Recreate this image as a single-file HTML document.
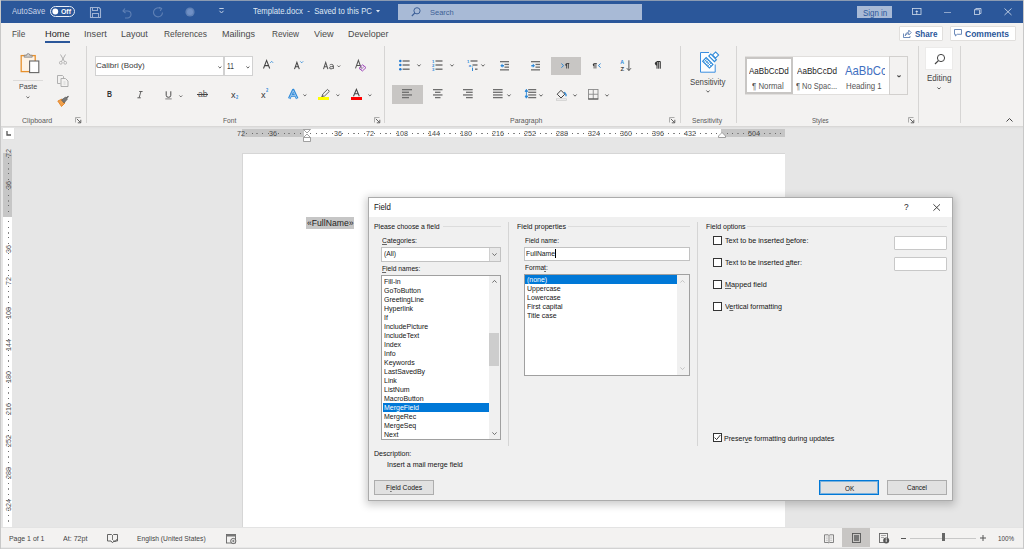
<!DOCTYPE html><html><head><meta charset="utf-8"><style>
*{margin:0;padding:0;box-sizing:border-box}
html,body{width:1024px;height:549px;overflow:hidden;background:#e6e6e6;font-family:"Liberation Sans",sans-serif;color:#262626}
.a{position:absolute}
.t{position:absolute;white-space:pre;line-height:1}
svg{overflow:visible}
u{text-decoration-thickness:1px;text-underline-offset:0.6px;text-decoration-color:#666}
</style></head><body>
<div class="a" style="left:0px;top:0px;width:1024px;height:23px;background:#2b579a"></div>
<div class="a" style="left:0px;top:23px;width:1024px;height:103px;background:#f3f2f1"></div>
<div class="a" style="left:0px;top:126px;width:1024px;height:1px;background:#d9d8d7"></div>
<div class="a" style="left:0px;top:127px;width:1024px;height:2px;background:linear-gradient(#dedede,#e6e6e6)"></div>
<div class="a" style="left:0px;top:527px;width:1024px;height:22px;background:#f3f2f1"></div>
<div class="a" style="left:0px;top:527px;width:1024px;height:1px;background:#e3e3e3"></div>
<div class="a" style="left:0px;top:547px;width:1024px;height:1px;background:#e8e8e8"></div>
<div class="a" style="left:0px;top:548px;width:1024px;height:1px;background:#d2d2d2"></div>
<div class="a" style="left:0px;top:0px;width:1024px;height:1px;background:#8b9bb2"></div>
<div class="a" style="left:0px;top:0px;width:1px;height:549px;background:#c8c8c8"></div>
<div class="a" style="left:1023px;top:0px;width:1px;height:549px;background:#c8c8c8"></div>
<div class="a" style="left:242px;top:153px;width:543px;height:374px;background:#fff;border-left:1px solid #d6d6d6;border-top:1px solid #d6d6d6"></div>
<div class="a" style="left:242px;top:129px;width:543px;height:8px;background:#fff"></div>
<div class="a" style="left:242px;top:129px;width:62px;height:8px;background:#c6c6c6"></div>
<div class="a" style="left:721px;top:129px;width:64px;height:8px;background:#c6c6c6"></div>
<div class="t" style="left:241.40px;top:129.9px;width:0;font-size:7.8px;color:#4a4a4a"><span style="position:absolute;left:-10px;width:20px;text-align:center;transform:scaleX(.92);white-space:nowrap">72</span></div>
<div class="t" style="left:273.45px;top:129.9px;width:0;font-size:7.8px;color:#4a4a4a"><span style="position:absolute;left:-10px;width:20px;text-align:center;transform:scaleX(.92);white-space:nowrap">36</span></div>
<div class="t" style="left:337.55px;top:129.9px;width:0;font-size:7.8px;color:#4a4a4a"><span style="position:absolute;left:-10px;width:20px;text-align:center;transform:scaleX(.92);white-space:nowrap">36</span></div>
<div class="t" style="left:369.60px;top:129.9px;width:0;font-size:7.8px;color:#4a4a4a"><span style="position:absolute;left:-10px;width:20px;text-align:center;transform:scaleX(.92);white-space:nowrap">72</span></div>
<div class="t" style="left:401.65px;top:129.9px;width:0;font-size:7.8px;color:#4a4a4a"><span style="position:absolute;left:-10px;width:20px;text-align:center;transform:scaleX(.92);white-space:nowrap">108</span></div>
<div class="t" style="left:433.70px;top:129.9px;width:0;font-size:7.8px;color:#4a4a4a"><span style="position:absolute;left:-10px;width:20px;text-align:center;transform:scaleX(.92);white-space:nowrap">144</span></div>
<div class="t" style="left:465.75px;top:129.9px;width:0;font-size:7.8px;color:#4a4a4a"><span style="position:absolute;left:-10px;width:20px;text-align:center;transform:scaleX(.92);white-space:nowrap">180</span></div>
<div class="t" style="left:497.80px;top:129.9px;width:0;font-size:7.8px;color:#4a4a4a"><span style="position:absolute;left:-10px;width:20px;text-align:center;transform:scaleX(.92);white-space:nowrap">216</span></div>
<div class="t" style="left:529.85px;top:129.9px;width:0;font-size:7.8px;color:#4a4a4a"><span style="position:absolute;left:-10px;width:20px;text-align:center;transform:scaleX(.92);white-space:nowrap">252</span></div>
<div class="t" style="left:561.90px;top:129.9px;width:0;font-size:7.8px;color:#4a4a4a"><span style="position:absolute;left:-10px;width:20px;text-align:center;transform:scaleX(.92);white-space:nowrap">288</span></div>
<div class="t" style="left:593.95px;top:129.9px;width:0;font-size:7.8px;color:#4a4a4a"><span style="position:absolute;left:-10px;width:20px;text-align:center;transform:scaleX(.92);white-space:nowrap">324</span></div>
<div class="t" style="left:626.00px;top:129.9px;width:0;font-size:7.8px;color:#4a4a4a"><span style="position:absolute;left:-10px;width:20px;text-align:center;transform:scaleX(.92);white-space:nowrap">360</span></div>
<div class="t" style="left:658.05px;top:129.9px;width:0;font-size:7.8px;color:#4a4a4a"><span style="position:absolute;left:-10px;width:20px;text-align:center;transform:scaleX(.92);white-space:nowrap">396</span></div>
<div class="t" style="left:690.10px;top:129.9px;width:0;font-size:7.8px;color:#4a4a4a"><span style="position:absolute;left:-10px;width:20px;text-align:center;transform:scaleX(.92);white-space:nowrap">432</span></div>
<div class="t" style="left:754.20px;top:129.9px;width:0;font-size:7.8px;color:#4a4a4a"><span style="position:absolute;left:-10px;width:20px;text-align:center;transform:scaleX(.92);white-space:nowrap">504</span></div>
<svg class="a" style="left:242px;top:0" width="543" height="140"><rect x="4" y="133" width="1" height="1" fill="#6a6a6a"/><rect x="10" y="133" width="1" height="1" fill="#6a6a6a"/><rect x="14" y="133" width="2" height="1" fill="#8a8a8a"/><rect x="20" y="133" width="1" height="1" fill="#6a6a6a"/><rect x="26" y="133" width="1" height="1" fill="#6a6a6a"/><rect x="36" y="133" width="1" height="1" fill="#6a6a6a"/><rect x="42" y="133" width="1" height="1" fill="#6a6a6a"/><rect x="46" y="133" width="2" height="1" fill="#8a8a8a"/><rect x="52" y="133" width="1" height="1" fill="#6a6a6a"/><rect x="58" y="133" width="1" height="1" fill="#6a6a6a"/><rect x="68" y="133" width="1" height="1" fill="#6a6a6a"/><rect x="74" y="133" width="1" height="1" fill="#6a6a6a"/><rect x="79" y="133" width="2" height="1" fill="#8a8a8a"/><rect x="84" y="133" width="1" height="1" fill="#6a6a6a"/><rect x="90" y="133" width="1" height="1" fill="#6a6a6a"/><rect x="100" y="133" width="1" height="1" fill="#6a6a6a"/><rect x="106" y="133" width="1" height="1" fill="#6a6a6a"/><rect x="111" y="133" width="2" height="1" fill="#8a8a8a"/><rect x="116" y="133" width="1" height="1" fill="#6a6a6a"/><rect x="122" y="133" width="1" height="1" fill="#6a6a6a"/><rect x="132" y="133" width="1" height="1" fill="#6a6a6a"/><rect x="138" y="133" width="1" height="1" fill="#6a6a6a"/><rect x="143" y="133" width="2" height="1" fill="#8a8a8a"/><rect x="148" y="133" width="1" height="1" fill="#6a6a6a"/><rect x="154" y="133" width="1" height="1" fill="#6a6a6a"/><rect x="164" y="133" width="1" height="1" fill="#6a6a6a"/><rect x="170" y="133" width="1" height="1" fill="#6a6a6a"/><rect x="175" y="133" width="2" height="1" fill="#8a8a8a"/><rect x="181" y="133" width="1" height="1" fill="#6a6a6a"/><rect x="186" y="133" width="1" height="1" fill="#6a6a6a"/><rect x="197" y="133" width="1" height="1" fill="#6a6a6a"/><rect x="202" y="133" width="1" height="1" fill="#6a6a6a"/><rect x="207" y="133" width="2" height="1" fill="#8a8a8a"/><rect x="213" y="133" width="1" height="1" fill="#6a6a6a"/><rect x="218" y="133" width="1" height="1" fill="#6a6a6a"/><rect x="229" y="133" width="1" height="1" fill="#6a6a6a"/><rect x="234" y="133" width="1" height="1" fill="#6a6a6a"/><rect x="239" y="133" width="2" height="1" fill="#8a8a8a"/><rect x="245" y="133" width="1" height="1" fill="#6a6a6a"/><rect x="250" y="133" width="1" height="1" fill="#6a6a6a"/><rect x="261" y="133" width="1" height="1" fill="#6a6a6a"/><rect x="266" y="133" width="1" height="1" fill="#6a6a6a"/><rect x="271" y="133" width="2" height="1" fill="#8a8a8a"/><rect x="277" y="133" width="1" height="1" fill="#6a6a6a"/><rect x="282" y="133" width="1" height="1" fill="#6a6a6a"/><rect x="293" y="133" width="1" height="1" fill="#6a6a6a"/><rect x="298" y="133" width="1" height="1" fill="#6a6a6a"/><rect x="303" y="133" width="2" height="1" fill="#8a8a8a"/><rect x="309" y="133" width="1" height="1" fill="#6a6a6a"/><rect x="314" y="133" width="1" height="1" fill="#6a6a6a"/><rect x="325" y="133" width="1" height="1" fill="#6a6a6a"/><rect x="330" y="133" width="1" height="1" fill="#6a6a6a"/><rect x="335" y="133" width="2" height="1" fill="#8a8a8a"/><rect x="341" y="133" width="1" height="1" fill="#6a6a6a"/><rect x="346" y="133" width="1" height="1" fill="#6a6a6a"/><rect x="357" y="133" width="1" height="1" fill="#6a6a6a"/><rect x="362" y="133" width="1" height="1" fill="#6a6a6a"/><rect x="367" y="133" width="2" height="1" fill="#8a8a8a"/><rect x="373" y="133" width="1" height="1" fill="#6a6a6a"/><rect x="378" y="133" width="1" height="1" fill="#6a6a6a"/><rect x="389" y="133" width="1" height="1" fill="#6a6a6a"/><rect x="394" y="133" width="1" height="1" fill="#6a6a6a"/><rect x="399" y="133" width="2" height="1" fill="#8a8a8a"/><rect x="405" y="133" width="1" height="1" fill="#6a6a6a"/><rect x="410" y="133" width="1" height="1" fill="#6a6a6a"/><rect x="421" y="133" width="1" height="1" fill="#6a6a6a"/><rect x="426" y="133" width="1" height="1" fill="#6a6a6a"/><rect x="431" y="133" width="2" height="1" fill="#8a8a8a"/><rect x="437" y="133" width="1" height="1" fill="#6a6a6a"/><rect x="442" y="133" width="1" height="1" fill="#6a6a6a"/><rect x="453" y="133" width="1" height="1" fill="#6a6a6a"/><rect x="458" y="133" width="1" height="1" fill="#6a6a6a"/><rect x="463" y="133" width="2" height="1" fill="#8a8a8a"/><rect x="469" y="133" width="1" height="1" fill="#6a6a6a"/><rect x="474" y="133" width="1" height="1" fill="#6a6a6a"/><rect x="485" y="133" width="1" height="1" fill="#6a6a6a"/><rect x="490" y="133" width="1" height="1" fill="#6a6a6a"/><rect x="495" y="133" width="2" height="1" fill="#8a8a8a"/><rect x="501" y="133" width="1" height="1" fill="#6a6a6a"/><rect x="506" y="133" width="1" height="1" fill="#6a6a6a"/><rect x="517" y="133" width="1" height="1" fill="#6a6a6a"/><rect x="522" y="133" width="1" height="1" fill="#6a6a6a"/><rect x="527" y="133" width="2" height="1" fill="#8a8a8a"/><rect x="533" y="133" width="1" height="1" fill="#6a6a6a"/><rect x="538" y="133" width="1" height="1" fill="#6a6a6a"/></svg>
<svg class="a" style="left:302.5px;top:128.5px;" width="8" height="13" viewBox="0 0 8 13"><path d="M.5 .5H7.5L4 4z" fill="#fff" stroke="#8a8a8a" stroke-width=".8"/><path d="M4 5L.5 8.5V12.5H7.5V8.5z" fill="#fff" stroke="#8a8a8a" stroke-width=".8"/><path d="M.5 8.5H7.5" stroke="#8a8a8a" stroke-width=".8"/></svg>
<svg class="a" style="left:717.5px;top:132px;" width="8" height="6" viewBox="0 0 8 6"><path d="M4 .5L.5 4V5.5H7.5V4z" fill="#fff" stroke="#8a8a8a" stroke-width=".8"/></svg>
<div class="a" style="left:2px;top:127px;width:13px;height:13px;background:#fff;border:1px solid #e3e3e3"></div>
<svg class="a" style="left:6px;top:131px;" width="5" height="5" viewBox="0 0 5 5"><path d="M1 0V4H5" fill="none" stroke="#555" stroke-width="1.3"/></svg>
<div class="a" style="left:3px;top:153px;width:9px;height:374px;background:#fff"></div>
<div class="a" style="left:3px;top:153px;width:9px;height:64px;background:#c6c6c6"></div>
<div class="t" style="left:8.5px;top:152.50px;width:0;height:0;font-size:7.8px;color:#4a4a4a"><span style="position:absolute;left:-8px;top:-4px;width:16px;height:8px;text-align:center;transform:rotate(-90deg) scaleX(.92);line-height:8px;white-space:nowrap">72</span></div>
<div class="t" style="left:8.5px;top:184.55px;width:0;height:0;font-size:7.8px;color:#4a4a4a"><span style="position:absolute;left:-8px;top:-4px;width:16px;height:8px;text-align:center;transform:rotate(-90deg) scaleX(.92);line-height:8px;white-space:nowrap">36</span></div>
<div class="t" style="left:8.5px;top:248.65px;width:0;height:0;font-size:7.8px;color:#4a4a4a"><span style="position:absolute;left:-8px;top:-4px;width:16px;height:8px;text-align:center;transform:rotate(-90deg) scaleX(.92);line-height:8px;white-space:nowrap">36</span></div>
<div class="t" style="left:8.5px;top:280.70px;width:0;height:0;font-size:7.8px;color:#4a4a4a"><span style="position:absolute;left:-8px;top:-4px;width:16px;height:8px;text-align:center;transform:rotate(-90deg) scaleX(.92);line-height:8px;white-space:nowrap">72</span></div>
<div class="t" style="left:8.5px;top:312.75px;width:0;height:0;font-size:7.8px;color:#4a4a4a"><span style="position:absolute;left:-8px;top:-4px;width:16px;height:8px;text-align:center;transform:rotate(-90deg) scaleX(.92);line-height:8px;white-space:nowrap">108</span></div>
<div class="t" style="left:8.5px;top:344.80px;width:0;height:0;font-size:7.8px;color:#4a4a4a"><span style="position:absolute;left:-8px;top:-4px;width:16px;height:8px;text-align:center;transform:rotate(-90deg) scaleX(.92);line-height:8px;white-space:nowrap">144</span></div>
<div class="t" style="left:8.5px;top:376.85px;width:0;height:0;font-size:7.8px;color:#4a4a4a"><span style="position:absolute;left:-8px;top:-4px;width:16px;height:8px;text-align:center;transform:rotate(-90deg) scaleX(.92);line-height:8px;white-space:nowrap">180</span></div>
<div class="t" style="left:8.5px;top:408.90px;width:0;height:0;font-size:7.8px;color:#4a4a4a"><span style="position:absolute;left:-8px;top:-4px;width:16px;height:8px;text-align:center;transform:rotate(-90deg) scaleX(.92);line-height:8px;white-space:nowrap">216</span></div>
<div class="t" style="left:8.5px;top:440.95px;width:0;height:0;font-size:7.8px;color:#4a4a4a"><span style="position:absolute;left:-8px;top:-4px;width:16px;height:8px;text-align:center;transform:rotate(-90deg) scaleX(.92);line-height:8px;white-space:nowrap">252</span></div>
<div class="t" style="left:8.5px;top:473.00px;width:0;height:0;font-size:7.8px;color:#4a4a4a"><span style="position:absolute;left:-8px;top:-4px;width:16px;height:8px;text-align:center;transform:rotate(-90deg) scaleX(.92);line-height:8px;white-space:nowrap">288</span></div>
<div class="t" style="left:8.5px;top:505.05px;width:0;height:0;font-size:7.8px;color:#4a4a4a"><span style="position:absolute;left:-8px;top:-4px;width:16px;height:8px;text-align:center;transform:rotate(-90deg) scaleX(.92);line-height:8px;white-space:nowrap">324</span></div>
<svg class="a" style="left:0;top:140px" width="20" height="400"><rect x="8" y="17" width="1" height="1" fill="#6a6a6a"/><rect x="8" y="23" width="1" height="1" fill="#6a6a6a"/><rect x="8" y="28" width="1" height="2" fill="#8a8a8a"/><rect x="8" y="33" width="1" height="1" fill="#6a6a6a"/><rect x="8" y="39" width="1" height="1" fill="#6a6a6a"/><rect x="8" y="49" width="1" height="1" fill="#6a6a6a"/><rect x="8" y="55" width="1" height="1" fill="#6a6a6a"/><rect x="8" y="60" width="1" height="2" fill="#8a8a8a"/><rect x="8" y="65" width="1" height="1" fill="#6a6a6a"/><rect x="8" y="71" width="1" height="1" fill="#6a6a6a"/><rect x="8" y="81" width="1" height="1" fill="#6a6a6a"/><rect x="8" y="87" width="1" height="1" fill="#6a6a6a"/><rect x="8" y="92" width="1" height="2" fill="#8a8a8a"/><rect x="8" y="97" width="1" height="1" fill="#6a6a6a"/><rect x="8" y="103" width="1" height="1" fill="#6a6a6a"/><rect x="8" y="113" width="1" height="1" fill="#6a6a6a"/><rect x="8" y="119" width="1" height="1" fill="#6a6a6a"/><rect x="8" y="124" width="1" height="2" fill="#8a8a8a"/><rect x="8" y="130" width="1" height="1" fill="#6a6a6a"/><rect x="8" y="135" width="1" height="1" fill="#6a6a6a"/><rect x="8" y="146" width="1" height="1" fill="#6a6a6a"/><rect x="8" y="151" width="1" height="1" fill="#6a6a6a"/><rect x="8" y="156" width="1" height="2" fill="#8a8a8a"/><rect x="8" y="162" width="1" height="1" fill="#6a6a6a"/><rect x="8" y="167" width="1" height="1" fill="#6a6a6a"/><rect x="8" y="178" width="1" height="1" fill="#6a6a6a"/><rect x="8" y="183" width="1" height="1" fill="#6a6a6a"/><rect x="8" y="188" width="1" height="2" fill="#8a8a8a"/><rect x="8" y="194" width="1" height="1" fill="#6a6a6a"/><rect x="8" y="199" width="1" height="1" fill="#6a6a6a"/><rect x="8" y="210" width="1" height="1" fill="#6a6a6a"/><rect x="8" y="215" width="1" height="1" fill="#6a6a6a"/><rect x="8" y="220" width="1" height="2" fill="#8a8a8a"/><rect x="8" y="226" width="1" height="1" fill="#6a6a6a"/><rect x="8" y="231" width="1" height="1" fill="#6a6a6a"/><rect x="8" y="242" width="1" height="1" fill="#6a6a6a"/><rect x="8" y="247" width="1" height="1" fill="#6a6a6a"/><rect x="8" y="252" width="1" height="2" fill="#8a8a8a"/><rect x="8" y="258" width="1" height="1" fill="#6a6a6a"/><rect x="8" y="263" width="1" height="1" fill="#6a6a6a"/><rect x="8" y="274" width="1" height="1" fill="#6a6a6a"/><rect x="8" y="279" width="1" height="1" fill="#6a6a6a"/><rect x="8" y="284" width="1" height="2" fill="#8a8a8a"/><rect x="8" y="290" width="1" height="1" fill="#6a6a6a"/><rect x="8" y="295" width="1" height="1" fill="#6a6a6a"/><rect x="8" y="306" width="1" height="1" fill="#6a6a6a"/><rect x="8" y="311" width="1" height="1" fill="#6a6a6a"/><rect x="8" y="316" width="1" height="2" fill="#8a8a8a"/><rect x="8" y="322" width="1" height="1" fill="#6a6a6a"/><rect x="8" y="327" width="1" height="1" fill="#6a6a6a"/><rect x="8" y="338" width="1" height="1" fill="#6a6a6a"/><rect x="8" y="343" width="1" height="1" fill="#6a6a6a"/><rect x="8" y="348" width="1" height="2" fill="#8a8a8a"/><rect x="8" y="354" width="1" height="1" fill="#6a6a6a"/><rect x="8" y="359" width="1" height="1" fill="#6a6a6a"/><rect x="8" y="370" width="1" height="1" fill="#6a6a6a"/><rect x="8" y="375" width="1" height="1" fill="#6a6a6a"/><rect x="8" y="380" width="1" height="2" fill="#8a8a8a"/></svg>
<div class="a" style="left:306.3px;top:217.2px;width:47.7px;height:11.5px;background:#c6c6c6"></div>
<div class="t" style="left:307.00px;top:218.69px;font-size:8.60px;color:#222;transform:scaleX(1.0031);transform-origin:0 0;">«FullName»</div>
<div class="t" style="left:11.70px;top:7.35px;font-size:9.00px;color:#c9d5e8;transform:scaleX(0.8510);transform-origin:0 0;">AutoSave</div>
<div class="a" style="left:49.5px;top:5.6px;width:25.5px;height:11.5px;border:1px solid #e8eef6;border-radius:6px"></div>
<svg class="a" style="left:52px;top:7.6px;" width="7" height="7" viewBox="0 0 7 7"><circle cx="3.3" cy="3.5" r="2.9" fill="#fff"/></svg>
<div class="t" style="left:61.00px;top:8.08px;font-size:7.20px;color:#fff;font-weight:bold;transform:scaleX(0.9612);transform-origin:0 0;">Off</div>
<svg class="a" style="left:90px;top:7px;" width="11" height="11" viewBox="0 0 11 11"><path d="M.5 .5h8.5l1.5 1.5v8.5h-10z" fill="none" stroke="#9fb2d3" stroke-width="1.1"/><rect x="2.5" y=".5" width="5" height="3" fill="none" stroke="#9fb2d3"/><rect x="2.5" y="6.5" width="6" height="4" fill="none" stroke="#9fb2d3"/></svg>
<svg class="a" style="left:122px;top:7px;" width="10" height="11" viewBox="0 0 10 11"><path d="M3 1.5 L1 4 L3.5 6" fill="none" stroke="#5f80b5" stroke-width="1.1"/><path d="M1.5 4 H5.5 A3.5 3.5 0 0 1 5.5 11 H3" fill="none" stroke="#5f80b5" stroke-width="1.1"/></svg>
<svg class="a" style="left:153px;top:6.5px;" width="11" height="11" viewBox="0 0 11 11"><path d="M9.5 5.5 A4.5 4.5 0 1 1 7 1.3" fill="none" stroke="#5f80b5" stroke-width="1.1"/><path d="M6 .3 L8.6 1.5 L7.2 4" fill="none" stroke="#5f80b5" stroke-width="1.1"/></svg>
<svg class="a" style="left:185px;top:7px;" width="10" height="10" viewBox="0 0 10 10"><circle cx="5" cy="5" r="4.6" fill="#5f80b5"/><circle cx="5" cy="5" r="3" fill="#7090c5"/></svg>
<svg class="a" style="left:218.5px;top:8px;" width="5" height="7" viewBox="0 0 5 7"><path d="M.3 .5h4.4" stroke="#c2cfe4" stroke-width="1"/><path d="M.5 2.8 L2.5 5 L4.5 2.8" fill="none" stroke="#c2cfe4" stroke-width="1"/></svg>
<div class="t" style="left:252.50px;top:6.59px;font-size:8.60px;color:#dfe7f3;transform:scaleX(0.9020);transform-origin:0 0;">Template.docx  -  Saved to this PC</div>
<svg class="a" style="left:375.5px;top:10px;" width="4" height="3" viewBox="0 0 4 3"><path d="M0 0h4L2 2.5z" fill="#dfe7f3"/></svg>
<div class="a" style="left:398px;top:4px;width:244px;height:16px;background:#a8bad6"></div>
<svg class="a" style="left:410.5px;top:6.5px;" width="10" height="10" viewBox="0 0 10 10"><circle cx="6" cy="3.8" r="3.1" fill="none" stroke="#3c5f97" stroke-width="1"/><path d="M3.8 6 L.8 9" stroke="#3c5f97" stroke-width="1.1"/></svg>
<div class="t" style="left:429.50px;top:8.84px;font-size:7.60px;color:#3d5f95;transform:scaleX(0.9879);transform-origin:0 0;">Search</div>
<div class="a" style="left:857px;top:6px;width:35px;height:12px;background:#a8bad6"></div>
<div class="t" style="left:862.50px;top:8.54px;font-size:8.30px;color:#2b579a;transform:scaleX(0.9528);transform-origin:0 0;">Sign in</div>
<svg class="a" style="left:912px;top:8px;" width="9.5" height="7" viewBox="0 0 9.5 7"><rect x=".5" y=".5" width="8.5" height="6" fill="none" stroke="#d0dbec" stroke-width=".8"/><path d="M4.75 2.2 L3.2 4 H6.3z" fill="#d0dbec"/><path d="M4.75 4v2.5" stroke="#d0dbec" stroke-width=".8"/></svg>
<div class="a" style="left:944px;top:11.5px;width:7px;height:1px;background:#8fa6cb"></div>
<svg class="a" style="left:974px;top:8.2px;" width="7.5" height="7" viewBox="0 0 7.5 7"><rect x=".5" y="1.8" width="5" height="4.7" fill="none" stroke="#d0dbec" stroke-width=".8"/><path d="M1.8 1.8V.5h5.2v5h-1.3" fill="none" stroke="#d0dbec" stroke-width=".8"/></svg>
<svg class="a" style="left:1004px;top:7.5px;" width="8" height="7.5" viewBox="0 0 8 7.5"><path d="M.5 .5L7.5 7M7.5 .5L.5 7" stroke="#d0dbec" stroke-width=".85"/></svg>
<div class="t" style="left:11.70px;top:28.61px;font-size:9.40px;color:#4a4a4a;transform:scaleX(0.8788);transform-origin:0 0;">File</div>
<div class="t" style="left:44.50px;top:28.61px;font-size:9.40px;color:#262626;transform:scaleX(0.9881);transform-origin:0 0;">Home</div>
<div class="t" style="left:83.60px;top:28.61px;font-size:9.40px;color:#4a4a4a;transform:scaleX(0.9702);transform-origin:0 0;">Insert</div>
<div class="t" style="left:121.00px;top:28.61px;font-size:9.40px;color:#4a4a4a;transform:scaleX(0.9523);transform-origin:0 0;">Layout</div>
<div class="t" style="left:163.70px;top:28.61px;font-size:9.40px;color:#4a4a4a;transform:scaleX(0.8964);transform-origin:0 0;">References</div>
<div class="t" style="left:222.40px;top:28.61px;font-size:9.40px;color:#4a4a4a;transform:scaleX(0.9624);transform-origin:0 0;">Mailings</div>
<div class="t" style="left:271.60px;top:28.61px;font-size:9.40px;color:#4a4a4a;transform:scaleX(0.8790);transform-origin:0 0;">Review</div>
<div class="t" style="left:314.00px;top:28.61px;font-size:9.40px;color:#4a4a4a;transform:scaleX(0.9698);transform-origin:0 0;">View</div>
<div class="t" style="left:348.30px;top:28.61px;font-size:9.40px;color:#4a4a4a;transform:scaleX(0.9472);transform-origin:0 0;">Developer</div>
<div class="a" style="left:44.5px;top:40.5px;width:25px;height:2px;background:#2b579a"></div>
<div class="a" style="left:899px;top:25.5px;width:44px;height:15.5px;background:#fff;border:1px solid #e1dfdd;border-radius:1px"></div>
<div class="a" style="left:949.5px;top:25.5px;width:66px;height:15.5px;background:#fff;border:1px solid #e1dfdd;border-radius:1px"></div>
<svg class="a" style="left:903px;top:28.5px;" width="8.5" height="9" viewBox="0 0 8.5 9"><path d="M.5 4.5v4h6.5v-1.5" fill="none" stroke="#4a6fa8" stroke-width=".8"/><path d="M2.2 6.8 C2.4 4.4 3.8 3.3 5.8 3.2 V1.2 L8.2 3.6 L5.8 6 V4.5 C4.3 4.5 3.2 5.2 2.2 6.8z" fill="none" stroke="#4a6fa8" stroke-width=".8"/></svg>
<div class="t" style="left:914.60px;top:29.82px;font-size:8.80px;color:#2b579a;font-weight:bold;transform:scaleX(0.9156);transform-origin:0 0;">Share</div>
<svg class="a" style="left:954px;top:29.3px;" width="8" height="7.5" viewBox="0 0 8 7.5"><path d="M.5 .5h7v4.8H3.2L1.4 7V5.3H.5z" fill="none" stroke="#4a6fa8" stroke-width=".8"/></svg>
<div class="t" style="left:964.90px;top:29.82px;font-size:8.80px;color:#2b579a;font-weight:bold;transform:scaleX(0.9671);transform-origin:0 0;">Comments</div>
<div class="a" style="left:86px;top:46px;width:1px;height:77px;background:#d6d5d4"></div>
<div class="a" style="left:383.5px;top:46px;width:1px;height:77px;background:#d6d5d4"></div>
<div class="a" style="left:679.5px;top:46px;width:1px;height:77px;background:#d6d5d4"></div>
<div class="a" style="left:735.5px;top:46px;width:1px;height:77px;background:#d6d5d4"></div>
<div class="a" style="left:917.5px;top:46px;width:1px;height:77px;background:#d6d5d4"></div>
<div class="a" style="left:960px;top:46px;width:1px;height:77px;background:#d6d5d4"></div>
<div class="t" style="left:21.80px;top:116.54px;font-size:7.60px;color:#595959;transform:scaleX(0.9315);transform-origin:0 0;">Clipboard</div>
<div class="t" style="left:222.50px;top:116.54px;font-size:7.60px;color:#595959;transform:scaleX(0.8750);transform-origin:0 0;">Font</div>
<div class="t" style="left:510.00px;top:116.54px;font-size:7.60px;color:#595959;transform:scaleX(0.9157);transform-origin:0 0;">Paragraph</div>
<div class="t" style="left:691.90px;top:116.54px;font-size:7.60px;color:#595959;transform:scaleX(0.8772);transform-origin:0 0;">Sensitivity</div>
<div class="t" style="left:812.20px;top:116.54px;font-size:7.60px;color:#595959;transform:scaleX(0.8064);transform-origin:0 0;">Styles</div>
<svg class="a" style="left:75px;top:117px;" width="6.5" height="6.5" viewBox="0 0 6.5 6.5"><path d="M.5 5.5V.5H5.5" fill="none" stroke="#9a9a9a" stroke-width=".8"/><path d="M1.8 1.8L5.6 5.6M5.8 2.8V5.8H2.8" fill="none" stroke="#555" stroke-width=".9"/></svg>
<svg class="a" style="left:373.5px;top:117px;" width="6.5" height="6.5" viewBox="0 0 6.5 6.5"><path d="M.5 5.5V.5H5.5" fill="none" stroke="#9a9a9a" stroke-width=".8"/><path d="M1.8 1.8L5.6 5.6M5.8 2.8V5.8H2.8" fill="none" stroke="#555" stroke-width=".9"/></svg>
<svg class="a" style="left:669px;top:117px;" width="6.5" height="6.5" viewBox="0 0 6.5 6.5"><path d="M.5 5.5V.5H5.5" fill="none" stroke="#9a9a9a" stroke-width=".8"/><path d="M1.8 1.8L5.6 5.6M5.8 2.8V5.8H2.8" fill="none" stroke="#555" stroke-width=".9"/></svg>
<svg class="a" style="left:907.5px;top:117px;" width="6.5" height="6.5" viewBox="0 0 6.5 6.5"><path d="M.5 5.5V.5H5.5" fill="none" stroke="#9a9a9a" stroke-width=".8"/><path d="M1.8 1.8L5.6 5.6M5.8 2.8V5.8H2.8" fill="none" stroke="#555" stroke-width=".9"/></svg>
<svg class="a" style="left:20px;top:52px;" width="20" height="21" viewBox="0 0 20 21"><rect x="1.2" y="3.6" width="14" height="16" fill="#fdf3e6" stroke="#e8912d" stroke-width="1.3"/><path d="M4.2 5.2 V3.2 H6.6 A1.6 1.6 0 0 1 9.8 3.2 H12.2 V5.2z" fill="#d0d0d0" stroke="#7a7a7a" stroke-width=".7"/><rect x="9.6" y="9" width="9.2" height="11.6" fill="#fff" stroke="#666" stroke-width="1.1"/></svg>
<div class="a" style="left:13px;top:79.5px;width:30px;height:1px;background:#dcdbda"></div>
<div class="t" style="left:18.70px;top:83.48px;font-size:7.90px;color:#444;transform:scaleX(0.9066);transform-origin:0 0;">Paste</div>
<svg class="a" style="left:26px;top:96px;" width="3.8" height="3" viewBox="0 0 3.8 3"><path d="M.4 .5L1.9 2 L3.4 .5" fill="none" stroke="#555" stroke-width=".9"/></svg>
<svg class="a" style="left:59px;top:53.5px;" width="8" height="11" viewBox="0 0 8 11"><path d="M1.5 .5 L5.5 7.5 M6.5 .5 L2.5 7.5" stroke="#a8a8a8" stroke-width=".9"/><circle cx="1.8" cy="8.8" r="1.4" fill="none" stroke="#a8a8a8" stroke-width=".8"/><circle cx="6.2" cy="8.8" r="1.4" fill="none" stroke="#a8a8a8" stroke-width=".8"/></svg>
<svg class="a" style="left:57px;top:74.5px;" width="12" height="12" viewBox="0 0 12 12"><path d="M.5 .5h5l1 1v2" fill="none" stroke="#a8a8a8" stroke-width=".9"/><path d="M.5 .5v8h3" fill="none" stroke="#a8a8a8" stroke-width=".9"/><path d="M4 3.5h4.5l2.5 2.5v5.5h-7z" fill="none" stroke="#a8a8a8" stroke-width=".9"/><path d="M6.5 7h2M6.5 9h2" stroke="#c0c0c0" stroke-width=".6"/></svg>
<svg class="a" style="left:57px;top:95.5px;" width="12" height="11" viewBox="0 0 12 11"><path d="M.8 5 L5 3 L8 7 L4.5 10.5z" fill="#f0a04b" stroke="#e07b1b" stroke-width=".8"/><path d="M4.5 4 L8.5 1 L10.5 3 L7 7z" fill="#777" stroke="#555" stroke-width=".6"/><path d="M9.3 2 L11.5 .2" stroke="#555" stroke-width="1.2"/></svg>
<div class="a" style="left:94.5px;top:56px;width:129px;height:19.5px;background:#fff;border:1px solid #d1d1d1"></div>
<div class="a" style="left:223.5px;top:56px;width:29px;height:19.5px;background:#fff;border:1px solid #d1d1d1"></div>
<div class="t" style="left:95.80px;top:62.41px;font-size:8.10px;color:#3a3a3a;transform:scaleX(0.9909);transform-origin:0 0;">Calibri (Body)</div>
<svg class="a" style="left:217.6px;top:65.5px;" width="3.8" height="3" viewBox="0 0 3.8 3"><path d="M.4 .5L1.9 2 L3.4 .5" fill="none" stroke="#444" stroke-width=".9"/></svg>
<div class="t" style="left:226.60px;top:62.02px;font-size:8.80px;color:#3a3a3a;transform:scaleX(0.7430);transform-origin:0 0;">11</div>
<svg class="a" style="left:246.2px;top:65.5px;" width="3.8" height="3" viewBox="0 0 3.8 3"><path d="M.4 .5L1.9 2 L3.4 .5" fill="none" stroke="#444" stroke-width=".9"/></svg>
<svg class="a" style="left:263px;top:60.3px;" width="7.2" height="8.5" viewBox="0 0 7.2 8.5"><path d="M0.5 8.5 L3.6 0.4 L6.7 8.5 M1.584 5.61 H5.6160000000000005" fill="none" stroke="#444" stroke-width="1.05"/></svg>
<svg class="a" style="left:270.3px;top:60.5px;" width="3.5" height="2.2" viewBox="0 0 3.5 2.2"><path d="M.3 1.8L1.7 .4L3.1 1.8" fill="none" stroke="#2b88d8" stroke-width=".9"/></svg>
<svg class="a" style="left:294.3px;top:61.7px;" width="5.8" height="7.1" viewBox="0 0 5.8 7.1"><path d="M0.5 7.1 L2.9 0.4 L5.3 7.1 M1.276 4.686 H4.524" fill="none" stroke="#444" stroke-width="1.05"/></svg>
<svg class="a" style="left:300.4px;top:60.8px;" width="3.5" height="2.2" viewBox="0 0 3.5 2.2"><path d="M.3 .4L1.7 1.8L3.1 .4" fill="none" stroke="#2b88d8" stroke-width=".9"/></svg>
<svg class="a" style="left:323px;top:61.7px;" width="5.4" height="7.1" viewBox="0 0 5.4 7.1"><path d="M0.5 7.1 L2.7 0.4 L4.9 7.1 M1.1880000000000002 4.686 H4.212000000000001" fill="none" stroke="#555" stroke-width="1.05"/></svg>
<svg class="a" style="left:328.8px;top:63.8px;" width="5.2" height="5.2" viewBox="0 0 5.2 5.2"><path d="M.7 1.1 Q1.5 .4 2.5 .4 Q4.4 .4 4.4 2 V4.9 M4.4 2.6 H2.4 Q.5 2.6 .5 3.8 Q.5 4.9 2 4.9 Q3.6 4.9 4.4 3.8" fill="none" stroke="#555" stroke-width=".95"/></svg>
<svg class="a" style="left:337px;top:64.8px;" width="3.6" height="2.9" viewBox="0 0 3.6 2.9"><path d="M.4 .5L1.8 1.9 L3.2 .5" fill="none" stroke="#555" stroke-width=".9"/></svg>
<svg class="a" style="left:355.2px;top:60.3px;" width="6.8" height="8.4" viewBox="0 0 6.8 8.4"><path d="M0.5 8.4 L3.4 0.4 L6.3 8.4 M1.496 5.5440000000000005 H5.304" fill="none" stroke="#555" stroke-width="1.05"/></svg>
<svg class="a" style="left:357.5px;top:63.5px;" width="9" height="7.5" viewBox="0 0 9 7.5"><path d="M1 4.3 L4.6 .8 L8 3.6 L4.4 7z" fill="none" stroke="#a24bbd" stroke-width="1"/><path d="M2.8 5.8 L6.2 2.3" stroke="#a24bbd" stroke-width=".8"/></svg>
<div class="t" style="left:106.90px;top:89.82px;font-size:8.80px;color:#333;font-weight:bold;transform:scaleX(0.7891);transform-origin:0 0;">B</div>
<svg class="a" style="left:137px;top:90.5px;" width="6" height="7.5" viewBox="0 0 6 7.5"><path d="M2.2 .5H5.6M.4 6.8H3.8M3.9 .5L2.1 6.8" fill="none" stroke="#555" stroke-width=".9"/></svg>
<svg class="a" style="left:164.5px;top:90.5px;" width="7" height="8.5" viewBox="0 0 7 8.5"><path d="M1.2 .3V4.3Q1.2 6.3 3.5 6.3Q5.8 6.3 5.8 4.3V.3" fill="none" stroke="#444" stroke-width=".95"/><path d="M.3 7.9H6.7" stroke="#666" stroke-width=".8"/></svg>
<svg class="a" style="left:179.2px;top:94.5px;" width="3.6" height="2.9" viewBox="0 0 3.6 2.9"><path d="M.4 .5L1.8 1.9 L3.2 .5" fill="none" stroke="#555" stroke-width=".9"/></svg>
<div class="t" style="left:197.60px;top:89.86px;font-size:8.40px;color:#555;transform:scaleX(1.0189);transform-origin:0 0;">ab</div>
<div class="a" style="left:196.7px;top:94px;width:11px;height:0.9px;background:#444"></div>
<div class="t" style="left:230.60px;top:90.69px;font-size:8.60px;color:#333;transform:scaleX(1.0698);transform-origin:0 0;">x</div>
<div class="t" style="left:236.00px;top:95.92px;font-size:4.80px;color:#2b88d8;font-weight:bold;transform:scaleX(0.8258);transform-origin:0 0;">2</div>
<div class="t" style="left:260.90px;top:90.69px;font-size:8.60px;color:#333;transform:scaleX(1.0698);transform-origin:0 0;">x</div>
<div class="t" style="left:266.10px;top:89.12px;font-size:4.80px;color:#2b88d8;font-weight:bold;transform:scaleX(0.8258);transform-origin:0 0;">2</div>
<svg class="a" style="left:288.3px;top:89px;" width="11" height="10.5" viewBox="0 0 11 10.5"><path d="M1.2 9.6 L5.2 1 L9.2 9.6 M3 6.4H7.4" fill="none" stroke="#2b88d8" stroke-width="2.6" stroke-linejoin="round"/><path d="M1.4 9.6 L5.2 1.6 L9 9.6 M3.2 6.4H7.2" fill="none" stroke="#e8f2fb" stroke-width=".6"/></svg>
<svg class="a" style="left:302.6px;top:94px;" width="3.8" height="2.9" viewBox="0 0 3.8 2.9"><path d="M.4 .5L1.9 1.9 L3.4 .5" fill="none" stroke="#555" stroke-width=".9"/></svg>
<svg class="a" style="left:318.5px;top:88.5px;" width="11" height="8.5" viewBox="0 0 11 8.5"><path d="M3 7.5 L3.8 5 L8.5 .4 L10.4 2.3 L5.6 7 z" fill="none" stroke="#555" stroke-width=".9"/><path d="M2.5 8 L4 6.4" stroke="#555" stroke-width=".9"/></svg>
<div class="a" style="left:318.3px;top:96.9px;width:11px;height:3px;background:#ffff00"></div>
<svg class="a" style="left:336px;top:94px;" width="3.8" height="2.9" viewBox="0 0 3.8 2.9"><path d="M.4 .5L1.9 1.9 L3.4 .5" fill="none" stroke="#555" stroke-width=".9"/></svg>
<svg class="a" style="left:353.4px;top:89px;" width="6.8" height="7.2" viewBox="0 0 6.8 7.2"><path d="M0.5 7.2 L3.4 0.4 L6.3 7.2 M1.496 4.752000000000001 H5.304" fill="none" stroke="#444" stroke-width="1.05"/></svg>
<div class="a" style="left:350.9px;top:96.9px;width:11px;height:3px;background:#ff0000"></div>
<svg class="a" style="left:368.4px;top:94px;" width="3.8" height="2.9" viewBox="0 0 3.8 2.9"><path d="M.4 .5L1.9 1.9 L3.4 .5" fill="none" stroke="#555" stroke-width=".9"/></svg>
<svg class="a" style="left:399px;top:59px;" width="11" height="12" viewBox="0 0 11 12"><circle cx="1.3" cy="2" r="1.25" fill="#1e78d2"/><rect x="3.6" y="1.3" width="7" height="1.4" fill="#6e6e6e"/><circle cx="1.3" cy="6" r="1.25" fill="#1e78d2"/><rect x="3.6" y="5.3" width="7" height="1.4" fill="#6e6e6e"/><circle cx="1.3" cy="10.200000000000003" r="1.25" fill="#1e78d2"/><rect x="3.6" y="9.500000000000004" width="7" height="1.4" fill="#6e6e6e"/></svg>
<svg class="a" style="left:417px;top:64.2px;" width="4" height="3.2" viewBox="0 0 4 3.2"><path d="M.4 .5L2.0 2.2 L3.6 .5" fill="none" stroke="#555" stroke-width="0.95"/></svg>
<svg class="a" style="left:432px;top:59px;" width="11" height="13" viewBox="0 0 11 13"><rect x="3.5" y="1.3" width="7" height="1.4" fill="#6e6e6e"/><rect x="3.5" y="5.3" width="7" height="1.4" fill="#6e6e6e"/><rect x="3.5" y="9.500000000000004" width="7" height="1.4" fill="#6e6e6e"/><text x="0" y="4" font-size="4.2" fill="#2b88d8" font-family="Liberation Sans" font-weight="bold">1</text><text x="0" y="8.2" font-size="4.2" fill="#2b88d8" font-family="Liberation Sans" font-weight="bold">2</text><text x="0" y="12.3" font-size="4.2" fill="#2b88d8" font-family="Liberation Sans" font-weight="bold">3</text></svg>
<svg class="a" style="left:449.5px;top:64.2px;" width="4" height="3.2" viewBox="0 0 4 3.2"><path d="M.4 .5L2.0 2.2 L3.6 .5" fill="none" stroke="#555" stroke-width="0.95"/></svg>
<svg class="a" style="left:467px;top:59px;" width="11" height="13" viewBox="0 0 11 13"><rect x="3.5" y="1.3" width="7" height="1.4" fill="#6e6e6e"/><rect x="5.5" y="5.3" width="5" height="1.4" fill="#6e6e6e"/><rect x="8" y="9.5" width="2.5" height="1.4" fill="#6e6e6e"/><text x="0" y="4" font-size="4.2" fill="#2b88d8" font-family="Liberation Sans" font-weight="bold">1</text><text x="1.8" y="8.2" font-size="4.2" fill="#2b88d8" font-family="Liberation Sans" font-weight="bold">a</text><rect x="5" y="9" width="1" height="3" fill="#2b88d8"/><rect x="5" y="7.6" width="1" height=".8" fill="#2b88d8"/></svg>
<svg class="a" style="left:481px;top:64.2px;" width="4" height="3.2" viewBox="0 0 4 3.2"><path d="M.4 .5L2.0 2.2 L3.6 .5" fill="none" stroke="#555" stroke-width="0.95"/></svg>
<svg class="a" style="left:500px;top:59.5px;" width="9" height="11" viewBox="0 0 9 11"><rect x="0" y="1" width="9" height="1.3" fill="#6e6e6e"/><rect x="4.5" y="3.8" width="4.5" height="1.3" fill="#6e6e6e"/><rect x="4.5" y="6.5" width="4.5" height="1.3" fill="#6e6e6e"/><rect x="0" y="9.2" width="9" height="1.3" fill="#6e6e6e"/><path d="M.3 5.7 L2.5 3.6 V4.9 H4 V6.5 H2.5 V7.8z" fill="#2b88d8"/></svg>
<svg class="a" style="left:530.5px;top:59.5px;" width="9" height="11" viewBox="0 0 9 11"><rect x="0" y="1" width="9" height="1.3" fill="#6e6e6e"/><rect x="4.5" y="3.8" width="4.5" height="1.3" fill="#6e6e6e"/><rect x="4.5" y="6.5" width="4.5" height="1.3" fill="#6e6e6e"/><rect x="0" y="9.2" width="9" height="1.3" fill="#6e6e6e"/><path d="M4 5.7 L1.8 3.6 V4.9 H.3 V6.5 H1.8 V7.8z" fill="#2b88d8"/></svg>
<div class="a" style="left:550.5px;top:56.5px;width:30.5px;height:18.5px;background:#c8c6c4"></div>
<svg class="a" style="left:561px;top:62.5px;" width="9" height="6" viewBox="0 0 9 6"><path d="M.4 .6 L2.6 2.6 L.4 4.6" fill="none" stroke="#2b88d8" stroke-width="1"/><path d="M5.6 5.5V.5H8.3M7.4 .5V5.5" fill="none" stroke="#333" stroke-width=".8"/><path d="M5.6 .5A1.3 1.3 0 0 0 5.6 3.1z" fill="#333"/></svg>
<svg class="a" style="left:591.5px;top:62.5px;" width="9" height="6" viewBox="0 0 9 6"><path d="M8.6 .6 L6.4 2.6 L8.6 4.6" fill="none" stroke="#2b88d8" stroke-width="1"/><path d="M2.1 5.5V.5H4.8M3.9 .5V5.5" fill="none" stroke="#333" stroke-width=".8"/><path d="M2.1 .5A1.3 1.3 0 0 0 2.1 3.1z" fill="#333"/></svg>
<svg class="a" style="left:620px;top:60px;" width="12" height="11.5" viewBox="0 0 12 11.5"><text x=".3" y="4.4" font-size="5.2" fill="#2b88d8" font-family="Liberation Sans" font-weight="bold">A</text><text x=".5" y="10.5" font-size="6" fill="#444" font-family="Liberation Sans" font-weight="bold">Z</text><path d="M8.9 .3V10.5M6.8 8.2L8.9 10.5L11 8.2" fill="none" stroke="#555" stroke-width="1"/></svg>
<svg class="a" style="left:652.5px;top:61px;" width="8" height="8" viewBox="0 0 8 8"><path d="M4 7.7V.5H7.3V7.7M5.7 .5V7.7" fill="none" stroke="#333" stroke-width="1"/><path d="M4 .5 A2.1 2.1 0 0 0 4 4.7z" fill="#333"/></svg>
<div class="a" style="left:392px;top:85px;width:30.5px;height:18.5px;background:#c8c6c4"></div>
<svg class="a" style="left:402px;top:89px;" width="11" height="10" viewBox="0 0 11 10"><rect x="0" y="0" width="10" height="1.3" fill="#6e6e6e"/><rect x="0" y="2.65" width="7" height="1.3" fill="#6e6e6e"/><rect x="0" y="5.3" width="10" height="1.3" fill="#6e6e6e"/><rect x="0" y="7.95" width="7" height="1.3" fill="#6e6e6e"/></svg>
<svg class="a" style="left:432.5px;top:89px;" width="11" height="10" viewBox="0 0 11 10"><rect x="0" y="0" width="9.5" height="1.3" fill="#6e6e6e"/><rect x="2" y="2.65" width="5.5" height="1.3" fill="#6e6e6e"/><rect x="0" y="5.3" width="9.5" height="1.3" fill="#6e6e6e"/><rect x="2" y="7.95" width="5.5" height="1.3" fill="#6e6e6e"/></svg>
<svg class="a" style="left:463px;top:89px;" width="11" height="10" viewBox="0 0 11 10"><rect x="0" y="0" width="9.7" height="1.3" fill="#6e6e6e"/><rect x="3" y="2.65" width="6.7" height="1.3" fill="#6e6e6e"/><rect x="0" y="5.3" width="9.7" height="1.3" fill="#6e6e6e"/><rect x="3" y="7.95" width="6.7" height="1.3" fill="#6e6e6e"/></svg>
<svg class="a" style="left:493.3px;top:89px;" width="11" height="10" viewBox="0 0 11 10"><rect x="0" y="0" width="9.6" height="1.3" fill="#6e6e6e"/><rect x="0" y="2.65" width="9.6" height="1.3" fill="#6e6e6e"/><rect x="0" y="5.3" width="9.6" height="1.3" fill="#6e6e6e"/><rect x="0" y="7.95" width="9.6" height="1.3" fill="#6e6e6e"/></svg>
<svg class="a" style="left:507px;top:94px;" width="4" height="3.2" viewBox="0 0 4 3.2"><path d="M.4 .5L2.0 2.2 L3.6 .5" fill="none" stroke="#555" stroke-width="0.95"/></svg>
<svg class="a" style="left:525px;top:89px;" width="12" height="10.5" viewBox="0 0 12 10.5"><rect x="3.2" y="0" width="8" height="1.3" fill="#6e6e6e"/><rect x="3.2" y="2.65" width="8" height="1.3" fill="#6e6e6e"/><rect x="3.2" y="5.3" width="8" height="1.3" fill="#6e6e6e"/><rect x="3.2" y="7.95" width="8" height="1.3" fill="#6e6e6e"/><path d="M1.4 1.5V8M.1 2.5L1.4 .3L2.7 2.5zM.1 7L1.4 9.2L2.7 7z" fill="#2b88d8" stroke="#2b88d8" stroke-width=".9"/></svg>
<svg class="a" style="left:539.2px;top:94px;" width="4" height="3.2" viewBox="0 0 4 3.2"><path d="M.4 .5L2.0 2.2 L3.6 .5" fill="none" stroke="#555" stroke-width="0.95"/></svg>
<svg class="a" style="left:555.5px;top:88.5px;" width="12" height="11.5" viewBox="0 0 12 11.5"><path d="M1.2 5.2 L5 1.3 L8.8 5.2 L5 9z" fill="none" stroke="#444" stroke-width="1"/><path d="M8.3 3 L10 5.5 V7.2" fill="none" stroke="#2b88d8" stroke-width="1.3"/><rect x=".5" y="9.8" width="10" height="1.5" fill="none" stroke="#c8c8c8" stroke-width=".7"/></svg>
<svg class="a" style="left:572.6px;top:94px;" width="4" height="3.2" viewBox="0 0 4 3.2"><path d="M.4 .5L2.0 2.2 L3.6 .5" fill="none" stroke="#555" stroke-width="0.95"/></svg>
<svg class="a" style="left:588px;top:89px;" width="10.5" height="10.5" viewBox="0 0 10.5 10.5"><rect x=".5" y=".5" width="9.5" height="9.5" fill="none" stroke="#8a8a8a" stroke-width=".9"/><path d="M5.25 .5V10M.5 5.25H10" stroke="#8a8a8a" stroke-width=".9"/><path d="M.3 10H10.2" stroke="#555" stroke-width="1.1"/></svg>
<svg class="a" style="left:605.4px;top:94px;" width="4" height="3.2" viewBox="0 0 4 3.2"><path d="M.4 .5L2.0 2.2 L3.6 .5" fill="none" stroke="#555" stroke-width="0.95"/></svg>
<svg class="a" style="left:699.5px;top:51.5px;" width="20" height="21" viewBox="0 0 20 21"><path d="M9 .5H.5V20.2H15.2V12.5" fill="#fbfdff" stroke="#3a8ee0" stroke-width="1"/><g transform="rotate(45 7.8 10.8)"><rect x="3" y="8.3" width="9.6" height="5" fill="#fff" stroke="#2b88d8" stroke-width="1.1"/><path d="M4.8 8.3V13.3M6.6 8.3V13.3M8.4 8.3V13.3M10.2 8.3V13.3M3 10.8H12.6" stroke="#2b88d8" stroke-width=".7"/></g><g transform="rotate(45 12.6 5.8)"><rect x="8.6" y="4.4" width="8" height="2.8" fill="#fff" stroke="#2b88d8" stroke-width="1.1"/></g><g transform="rotate(45 15.6 3)"><rect x="13.5" y=".8" width="4.2" height="4.4" fill="#fff" stroke="#2b88d8" stroke-width="1"/></g></svg>
<div class="t" style="left:690.00px;top:77.59px;font-size:8.60px;color:#444;transform:scaleX(0.9147);transform-origin:0 0;">Sensitivity</div>
<svg class="a" style="left:705.5px;top:90.3px;" width="4" height="3.2" viewBox="0 0 4 3.2"><path d="M.4 .5L2.0 2.2 L3.6 .5" fill="none" stroke="#555" stroke-width="0.95"/></svg>
<div class="a" style="left:744.5px;top:56.3px;width:145px;height:39px;background:#fff;border:1px solid #e1dfdd;border-right:none"></div>
<div class="a" style="left:745px;top:57px;width:47.8px;height:37px;border:2px solid #c8c6c4"></div>
<div class="t" style="left:749.00px;top:66.52px;font-size:8.80px;color:#1c1c1c;transform:scaleX(0.9146);transform-origin:0 0;">AaBbCcDd</div>
<div class="t" style="left:752.20px;top:81.96px;font-size:8.40px;color:#555;transform:scaleX(0.9371);transform-origin:0 0;">¶ Normal</div>
<div class="t" style="left:797.10px;top:66.52px;font-size:8.80px;color:#1c1c1c;transform:scaleX(0.9215);transform-origin:0 0;">AaBbCcDd</div>
<div class="t" style="left:795.90px;top:81.96px;font-size:8.40px;color:#555;transform:scaleX(0.8964);transform-origin:0 0;">¶ No Spac...</div>
<div class="a" style="left:840px;top:60.8px;width:44.5px;height:20px;overflow:hidden"><div class="t" style="left:4.90px;top:4.09px;font-size:12.60px;color:#3f6fbf;transform:scaleX(0.9000);transform-origin:0 0;">AaBbCcDd</div></div>
<div class="t" style="left:846.40px;top:82.26px;font-size:8.40px;color:#555;transform:scaleX(0.9346);transform-origin:0 0;">Heading 1</div>
<div class="a" style="left:889.3px;top:56.2px;width:18.3px;height:39px;background:#f3f2f1;border:1px solid #d2d0ce"></div>
<svg class="a" style="left:896.5px;top:74.5px;" width="4" height="2.9" viewBox="0 0 4 2.9"><path d="M.4 .5L2.0 1.9 L3.6 .5" fill="none" stroke="#444" stroke-width="1.1"/></svg>
<div class="a" style="left:925.4px;top:47.3px;width:27.4px;height:23px;background:#fff;border:1px solid #ecebea"></div>
<svg class="a" style="left:933.5px;top:52.5px;" width="12" height="12" viewBox="0 0 12 12"><circle cx="7" cy="5" r="3.6" fill="none" stroke="#444" stroke-width="1"/><path d="M4.4 7.6 L1 11" stroke="#444" stroke-width="1.2"/></svg>
<div class="t" style="left:926.70px;top:74.49px;font-size:8.60px;color:#444;transform:scaleX(0.9310);transform-origin:0 0;">Editing</div>
<svg class="a" style="left:937.2px;top:87px;" width="4" height="3" viewBox="0 0 4 3"><path d="M.4 .5L2.0 2 L3.6 .5" fill="none" stroke="#555" stroke-width="0.95"/></svg>
<svg class="a" style="left:1006px;top:118px;" width="7" height="4" viewBox="0 0 7 4"><path d="M.5 3.5L3.5 .5L6.5 3.5" fill="none" stroke="#444" stroke-width="1"/></svg>
<div class="t" style="left:9.00px;top:534.51px;font-size:7.40px;color:#444;transform:scaleX(0.9379);transform-origin:0 0;">Page 1 of 1</div>
<div class="t" style="left:62.80px;top:534.51px;font-size:7.40px;color:#444;transform:scaleX(0.9610);transform-origin:0 0;">At: 72pt</div>
<svg class="a" style="left:107px;top:533.5px;" width="11" height="9.5" viewBox="0 0 11 9.5"><path d="M.5 .5H4.5L5.5 1.5L6.5 .5H10.5V7H7L5.5 8.8L4 7H.5z" fill="none" stroke="#555" stroke-width=".9"/><path d="M5.5 1.5V6" stroke="#555" stroke-width=".8"/><path d="M6.5 6.5L7.8 8L10.2 5" fill="none" stroke="#555" stroke-width=".9"/></svg>
<div class="t" style="left:136.60px;top:534.71px;font-size:7.40px;color:#444;transform:scaleX(0.9079);transform-origin:0 0;">English (United States)</div>
<svg class="a" style="left:225.5px;top:533.5px;" width="11" height="10" viewBox="0 0 11 10"><rect x=".5" y=".5" width="9" height="8.5" fill="none" stroke="#666" stroke-width=".9"/><rect x=".5" y=".5" width="9" height="2" fill="#777"/><circle cx="7.3" cy="7" r="2.6" fill="#fff" stroke="#555" stroke-width=".9"/><path d="M7.3 5.6V8.4M5.9 7H8.7" stroke="#555" stroke-width=".7"/></svg>
<svg class="a" style="left:823.5px;top:533.5px;" width="10" height="9.5" viewBox="0 0 10 9.5"><path d="M.5 .8H4.3L5 1.5L5.7 .8H9.5V8.5H5.7L5 9.2L4.3 8.5H.5z" fill="none" stroke="#777" stroke-width=".9"/><path d="M5 1.5V8.5" stroke="#777" stroke-width=".8"/><path d="M1.8 3H3.8M1.8 4.8H3.8M1.8 6.6H3.8M6.2 3H8.2M6.2 4.8H8.2M6.2 6.6H8.2" stroke="#aaa" stroke-width=".6"/></svg>
<div class="a" style="left:842.4px;top:528px;width:27.6px;height:19px;background:#c8c6c4"></div>
<svg class="a" style="left:851.5px;top:533px;" width="9" height="10" viewBox="0 0 9 10"><rect x=".5" y=".5" width="8" height="9" fill="none" stroke="#555" stroke-width=".9"/><rect x="2" y="2" width="5" height="6" fill="#777"/></svg>
<svg class="a" style="left:879px;top:533px;" width="11" height="10.5" viewBox="0 0 11 10.5"><rect x=".5" y=".5" width="8" height="9" fill="none" stroke="#666" stroke-width=".9"/><path d="M2 2.5H7M2 4.5H5" stroke="#888" stroke-width=".7"/><circle cx="7.2" cy="7.4" r="3" fill="#555"/><path d="M7.2 6.3V8.9" stroke="#fff" stroke-width=".9"/><circle cx="7.2" cy="5.4" r=".5" fill="#fff"/></svg>
<div class="a" style="left:901.3px;top:537.5px;width:5.2px;height:1px;background:#555"></div>
<div class="a" style="left:910.3px;top:537.8px;width:66px;height:1px;background:#c8c8c8"></div>
<div class="a" style="left:941.7px;top:533.4px;width:3.5px;height:8px;background:#666"></div>
<svg class="a" style="left:979.5px;top:534.5px;" width="6" height="6" viewBox="0 0 6 6"><path d="M3 0V6M0 3H6" stroke="#555" stroke-width="1"/></svg>
<div class="t" style="left:997.70px;top:534.51px;font-size:7.40px;color:#444;transform:scaleX(0.8499);transform-origin:0 0;">100%</div>
<div class="a" style="left:368px;top:197px;width:585px;height:304px;background:#f0f0f0;border:1px solid #ababab;box-shadow:0 2px 8px 2px rgba(0,0,0,.2)"></div>
<div class="a" style="left:369px;top:198px;width:583px;height:19px;background:#fff"></div>
<div class="t" style="left:374.00px;top:202.69px;font-size:8.60px;color:#141414;transform:scaleX(0.9109);transform-origin:0 0;">Field</div>
<div class="t" style="left:904.20px;top:202.21px;font-size:9.40px;color:#222;transform:scaleX(0.8817);transform-origin:0 0;">?</div>
<svg class="a" style="left:932.5px;top:203.5px;" width="7.5" height="7" viewBox="0 0 7.5 7"><path d="M.4 .3L7 6.7M7 .3L.4 6.7" stroke="#333" stroke-width=".9"/></svg>
<div class="t" style="left:374.00px;top:222.62px;font-size:7.50px;color:#141414;transform:scaleX(0.9188);transform-origin:0 0;">Please choose a field</div>
<div class="a" style="left:443px;top:226px;width:58px;height:1px;background:#dcdcdc"></div>
<div class="t" style="left:516.60px;top:222.93px;font-size:7.50px;color:#141414;transform:scaleX(0.9482);transform-origin:0 0;">Field properties</div>
<div class="a" style="left:568px;top:226px;width:122px;height:1px;background:#dcdcdc"></div>
<div class="t" style="left:705.60px;top:222.93px;font-size:7.50px;color:#141414;transform:scaleX(0.9312);transform-origin:0 0;">Field options</div>
<div class="a" style="left:747px;top:226px;width:200px;height:1px;background:#dcdcdc"></div>
<div class="a" style="left:508px;top:222px;width:1px;height:224px;background:#d5d5d5"></div>
<div class="a" style="left:697px;top:222px;width:1px;height:224px;background:#d5d5d5"></div>
<div class="t" style="left:381.60px;top:236.62px;font-size:7.50px;color:#141414;transform:scaleX(0.9123);transform-origin:0 0;"><u>C</u>ategories:</div>
<div class="a" style="left:381px;top:247px;width:120px;height:15px;background:#fff;border:1px solid #c2c2c2"></div>
<div class="a" style="left:489px;top:248px;width:11px;height:13px;background:#e8e8e8;border-left:1px solid #d0d0d0"></div>
<svg class="a" style="left:492.2px;top:252.8px;" width="5" height="3.5" viewBox="0 0 5 3.5"><path d="M.4 .4L2.5 2.6L4.6 .4" fill="none" stroke="#555" stroke-width=".8"/></svg>
<div class="t" style="left:384.20px;top:250.43px;font-size:7.50px;color:#141414;transform:scaleX(0.8989);transform-origin:0 0;">(All)</div>
<div class="t" style="left:381.60px;top:264.62px;font-size:7.50px;color:#141414;transform:scaleX(0.8920);transform-origin:0 0;"><u>F</u>ield names:</div>
<div class="a" style="left:381px;top:275px;width:120px;height:165px;background:#fff;border:1px solid #a0a0a0"></div>
<div class="a" style="left:489px;top:276px;width:11px;height:163px;background:#f0f0f0"></div>
<div class="a" style="left:489.3px;top:333px;width:10px;height:32.5px;background:#cdcdcd"></div>
<svg class="a" style="left:492.2px;top:279.5px;" width="5" height="3.5" viewBox="0 0 5 3.5"><path d="M.4 2.6L2.5 .4L4.6 2.6" fill="none" stroke="#606060" stroke-width=".9"/></svg>
<svg class="a" style="left:492.2px;top:431.5px;" width="5" height="3.5" viewBox="0 0 5 3.5"><path d="M.4 .4L2.5 2.6L4.6 .4" fill="none" stroke="#606060" stroke-width=".9"/></svg>
<div class="t" style="left:384.00px;top:277.62px;font-size:7.50px;color:#141414;transform:scaleX(0.9300);transform-origin:0 0;">Fill-in</div>
<div class="t" style="left:384.00px;top:286.62px;font-size:7.50px;color:#141414;transform:scaleX(0.9300);transform-origin:0 0;">GoToButton</div>
<div class="t" style="left:384.00px;top:295.62px;font-size:7.50px;color:#141414;transform:scaleX(0.9300);transform-origin:0 0;">GreetingLine</div>
<div class="t" style="left:384.00px;top:304.62px;font-size:7.50px;color:#141414;transform:scaleX(0.9300);transform-origin:0 0;">Hyperlink</div>
<div class="t" style="left:384.00px;top:313.62px;font-size:7.50px;color:#141414;transform:scaleX(0.9300);transform-origin:0 0;">If</div>
<div class="t" style="left:384.00px;top:322.62px;font-size:7.50px;color:#141414;transform:scaleX(0.9300);transform-origin:0 0;">IncludePicture</div>
<div class="t" style="left:384.00px;top:331.62px;font-size:7.50px;color:#141414;transform:scaleX(0.9300);transform-origin:0 0;">IncludeText</div>
<div class="t" style="left:384.00px;top:340.62px;font-size:7.50px;color:#141414;transform:scaleX(0.9300);transform-origin:0 0;">Index</div>
<div class="t" style="left:384.00px;top:349.62px;font-size:7.50px;color:#141414;transform:scaleX(0.9300);transform-origin:0 0;">Info</div>
<div class="t" style="left:384.00px;top:358.62px;font-size:7.50px;color:#141414;transform:scaleX(0.9300);transform-origin:0 0;">Keywords</div>
<div class="t" style="left:384.00px;top:367.62px;font-size:7.50px;color:#141414;transform:scaleX(0.9300);transform-origin:0 0;">LastSavedBy</div>
<div class="t" style="left:384.00px;top:376.62px;font-size:7.50px;color:#141414;transform:scaleX(0.9300);transform-origin:0 0;">Link</div>
<div class="t" style="left:384.00px;top:385.62px;font-size:7.50px;color:#141414;transform:scaleX(0.9300);transform-origin:0 0;">ListNum</div>
<div class="t" style="left:384.00px;top:394.62px;font-size:7.50px;color:#141414;transform:scaleX(0.9300);transform-origin:0 0;">MacroButton</div>
<div class="a" style="left:382.5px;top:402.8px;width:106px;height:9px;background:#0078d7"></div>
<div class="t" style="left:384.00px;top:403.62px;font-size:7.50px;color:#fff;transform:scaleX(0.9300);transform-origin:0 0;">MergeField</div>
<div class="t" style="left:384.00px;top:412.62px;font-size:7.50px;color:#141414;transform:scaleX(0.9300);transform-origin:0 0;">MergeRec</div>
<div class="t" style="left:384.00px;top:421.62px;font-size:7.50px;color:#141414;transform:scaleX(0.9300);transform-origin:0 0;">MergeSeq</div>
<div class="t" style="left:384.00px;top:430.62px;font-size:7.50px;color:#141414;transform:scaleX(0.9300);transform-origin:0 0;">Next</div>
<div class="t" style="left:524.80px;top:236.62px;font-size:7.50px;color:#141414;transform:scaleX(0.8676);transform-origin:0 0;">Field name:</div>
<div class="a" style="left:524px;top:247px;width:166px;height:13.5px;background:#fff;border:1px solid #c2c2c2"></div>
<div class="t" style="left:525.60px;top:249.93px;font-size:7.50px;color:#141414;transform:scaleX(0.9034);transform-origin:0 0;">FullName</div>
<div class="a" style="left:555px;top:249px;width:1px;height:9px;background:#000"></div>
<div class="t" style="left:524.80px;top:263.93px;font-size:7.50px;color:#141414;transform:scaleX(0.8824);transform-origin:0 0;">Forma<u>t</u>:</div>
<div class="a" style="left:524px;top:274px;width:166px;height:102px;background:#fff;border:1px solid #a0a0a0"></div>
<div class="a" style="left:677px;top:275px;width:12px;height:100px;background:#f0f0f0"></div>
<div class="a" style="left:525px;top:275px;width:152px;height:9px;background:#0078d7"></div>
<svg class="a" style="left:680px;top:279.5px;" width="5" height="3.5" viewBox="0 0 5 3.5"><path d="M.4 2.6L2.5 .4L4.6 2.6" fill="none" stroke="#c0c0c0" stroke-width=".9"/></svg>
<svg class="a" style="left:680px;top:366.5px;" width="5" height="3.5" viewBox="0 0 5 3.5"><path d="M.4 .4L2.5 2.6L4.6 .4" fill="none" stroke="#c0c0c0" stroke-width=".9"/></svg>
<div class="t" style="left:526.60px;top:275.62px;font-size:7.50px;color:#fff;transform:scaleX(0.9300);transform-origin:0 0;">(none)</div>
<div class="t" style="left:526.60px;top:284.62px;font-size:7.50px;color:#141414;transform:scaleX(0.9300);transform-origin:0 0;">Uppercase</div>
<div class="t" style="left:526.60px;top:293.62px;font-size:7.50px;color:#141414;transform:scaleX(0.9300);transform-origin:0 0;">Lowercase</div>
<div class="t" style="left:526.60px;top:302.62px;font-size:7.50px;color:#141414;transform:scaleX(0.9300);transform-origin:0 0;">First capital</div>
<div class="t" style="left:526.60px;top:311.62px;font-size:7.50px;color:#141414;transform:scaleX(0.9300);transform-origin:0 0;">Title case</div>
<div class="a" style="left:713px;top:236px;width:9px;height:9px;background:#fff;border:1px solid #333"></div>
<div class="t" style="left:724.50px;top:237.12px;font-size:7.50px;color:#141414;transform:scaleX(0.9615);transform-origin:0 0;">Text to be inserted <u>b</u>efore:</div>
<div class="a" style="left:713px;top:258px;width:9px;height:9px;background:#fff;border:1px solid #333"></div>
<div class="t" style="left:724.50px;top:259.12px;font-size:7.50px;color:#141414;transform:scaleX(0.9568);transform-origin:0 0;">Text to be inserted <u>a</u>fter:</div>
<div class="a" style="left:713px;top:280px;width:9px;height:9px;background:#fff;border:1px solid #333"></div>
<div class="t" style="left:724.50px;top:281.12px;font-size:7.50px;color:#141414;transform:scaleX(0.9712);transform-origin:0 0;"><u>M</u>apped field</div>
<div class="a" style="left:713px;top:302px;width:9px;height:9px;background:#fff;border:1px solid #333"></div>
<div class="t" style="left:724.50px;top:303.12px;font-size:7.50px;color:#141414;transform:scaleX(0.9494);transform-origin:0 0;">V<u>e</u>rtical formatting</div>
<div class="a" style="left:894px;top:235.5px;width:53px;height:14px;background:#fff;border:1px solid #c8c8c8;border-radius:1px"></div>
<div class="a" style="left:894px;top:257.3px;width:53px;height:14px;background:#fff;border:1px solid #c8c8c8;border-radius:1px"></div>
<div class="a" style="left:713px;top:433px;width:9px;height:9px;background:#fff;border:1px solid #333"></div>
<svg class="a" style="left:714px;top:434px;" width="7" height="7" viewBox="0 0 7 7"><path d="M.6 3.6L2.6 5.6L6.4 1" fill="none" stroke="#222" stroke-width=".9"/></svg>
<div class="t" style="left:724.30px;top:434.62px;font-size:7.50px;color:#141414;transform:scaleX(0.9424);transform-origin:0 0;">Preser<u>v</u>e formatting during updates</div>
<div class="t" style="left:373.90px;top:449.62px;font-size:7.50px;color:#141414;transform:scaleX(0.9419);transform-origin:0 0;">Description:</div>
<div class="t" style="left:386.70px;top:460.62px;font-size:7.50px;color:#141414;transform:scaleX(0.9460);transform-origin:0 0;">Insert a mail merge field</div>
<div class="a" style="left:374px;top:480px;width:60px;height:15px;background:#e1e1e1;border:1px solid #adadad"></div>
<div class="t" style="left:385.70px;top:484.23px;font-size:7.50px;color:#141414;transform:scaleX(0.9022);transform-origin:0 0;">F<u>i</u>eld Codes</div>
<div class="a" style="left:819px;top:480px;width:60px;height:15px;background:#e1e1e1;border:1px solid #0078d7;box-shadow:inset 0 0 0 1px rgba(0,120,215,.45)"></div>
<div class="t" style="left:844.80px;top:484.62px;font-size:7.50px;color:#141414;transform:scaleX(0.8489);transform-origin:0 0;">OK</div>
<div class="a" style="left:887px;top:480px;width:60px;height:15px;background:#e1e1e1;border:1px solid #adadad"></div>
<div class="t" style="left:907.00px;top:484.43px;font-size:7.50px;color:#141414;transform:scaleX(0.8561);transform-origin:0 0;">Cancel</div>
</body></html>
